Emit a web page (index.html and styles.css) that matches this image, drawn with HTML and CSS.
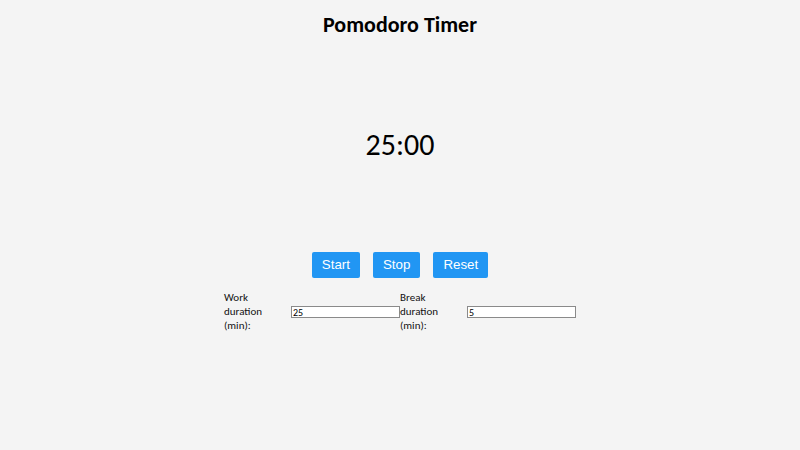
FILE: index.html
```html
<!DOCTYPE html>
<html lang="en">

<head>
  <meta charset="UTF-8">
  <meta name="viewport" content="width=device-width, initial-scale=1.0">
  <title>Pomodoro Timer</title>
  <link rel="stylesheet" href="styles.css">
</head>

<body>

  <div class="container">
    <h1>Pomodoro Timer</h1>
    <div id="timer" class="timer">25:00</div>

    <div class="controls">
      <button id="startBtn" class="btn">Start</button>
      <button id="stopBtn" class="btn">Stop</button>
      <button id="resetBtn" class="btn">Reset</button>
    </div>

    <div class="settings">
      <div class="setting">
        <label for="workDuration">Work duration (min):</label>
        <input type="number" id="workDuration" value="25">
      </div>
      <div class="setting">
        <label for="breakDuration">Break duration (min):</label>
        <input type="number" id="breakDuration" value="5">
      </div>
    </div>
  </div>

</body>

</html>
```

FILE: styles.css
```css
body,
html {
  height: 100%;
  margin: 0;
  font-family: Carlito, Calibri, "Open Sans", sans-serif;
  background-color: #f4f4f4;
  color: #000;
}

.container {
  text-align: center;
  width: 100%;
}

h1 {
  font-size: 22px;
  margin: 11px 0 0;
}

.timer {
  font-size: 30px;
  margin-top: 88px;
}

.controls {
  display: flex;
  justify-content: center;
  gap: 13px;
  margin-top: 89px;
}

.btn {
  background-color: #2196F3;
  color: white;
  font-family: "Liberation Sans", Arial, sans-serif;
  font-size: 13.33px;
  line-height: 16px;
  padding: 5px 10px;
  border: none;
  border-radius: 2px;
  cursor: pointer;
}

.settings {
  display: flex;
  justify-content: center;
  margin-top: 13px;
}

.setting {
  display: flex;
  align-items: center;
  gap: 7px;
  text-align: left;
}

.setting label {
  width: 60px;
  font-size: 11px;
  line-height: 14px;
  color: #111;
}

.setting input {
  width: 109px;
  height: 12px;
  box-sizing: border-box;
  padding: 0 1px;
  font-family: inherit;
  font-size: 10px;
  border: 1px solid #8a8a8a;
  background: #fff;
  -moz-appearance: textfield;
}

.setting input::-webkit-outer-spin-button,
.setting input::-webkit-inner-spin-button {
  -webkit-appearance: none;
  margin: 0;
}
```
